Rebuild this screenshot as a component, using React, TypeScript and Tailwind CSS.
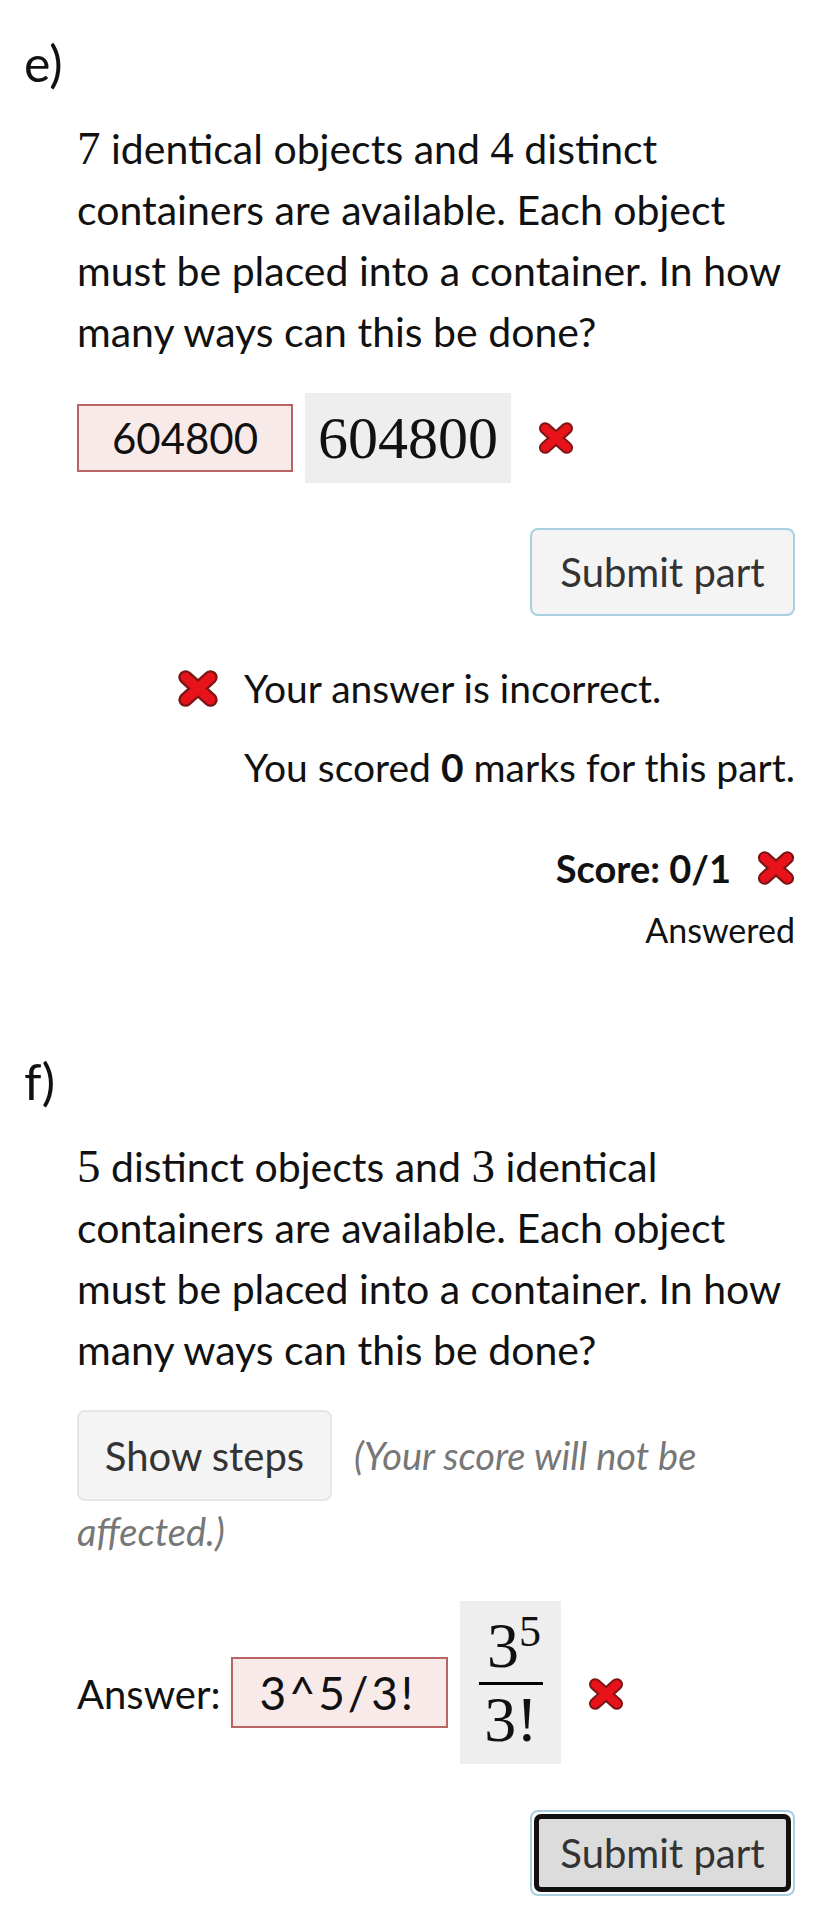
import React from "react";

function Cross({ w, h }: { w: number; h: number }) {
  return (
    <svg width={w} height={h} viewBox="0 0 24 22" className="shrink-0">
      <g strokeLinecap="round">
        <path d="M4.6 4.4 L19.4 17.6 M19.4 4.4 L4.6 17.6" stroke="#7d1515" strokeWidth="8.6" fill="none" />
        <path d="M4.6 4.4 L19.4 17.6 M19.4 4.4 L4.6 17.6" stroke="#e8121b" strokeWidth="5.8" fill="none" />
      </g>
    </svg>
  );
}

const M = ({ children }: { children: React.ReactNode }) => (
  <span className="font-['Liberation_Serif'] text-[47px]">{children}</span>
);

export default function App() {
  return (
    <div className="w-[828px] min-h-[1920px] bg-white pl-[24px] pr-[33px] font-['Lato'] text-[#111]">
      {/* Part e */}
      <div className="pt-[33px] text-[50px] leading-[60px]">e)</div>
      <div className="pl-[53px]">
        <p className="mt-[25px] text-[41px] leading-[61px]">
          <M>7</M> identical objects and <M>4</M> distinct
          <br />
          containers are available. Each object
          <br />
          must be placed into a container. In how
          <br />
          many ways can this be done?
        </p>

        <div className="mt-[31px] flex items-center">
          <div className="flex h-[68px] w-[216px] items-center justify-center border-2 border-[#b86464] bg-[#f9eaea] text-[42px] text-[#111]">
            604800
          </div>
          <div className="ml-[12px] flex h-[90px] w-[206px] items-center justify-center bg-[#eeeeee] font-['Liberation_Serif'] text-[60px] leading-[90px]">
            604800
          </div>
          <div className="ml-[27px]">
            <Cross w={36} h={32} />
          </div>
        </div>

        <div className="mt-[45px] flex justify-end">
          <button className="h-[88px] w-[265px] rounded-[8px] border-2 border-[#a9cfe0] bg-[#f4f4f4] text-[40px] text-[#333]">
            Submit part
          </button>
        </div>

        <div className="mt-[42px] flex justify-end">
          <div className="grid grid-cols-[40px_auto] items-center gap-x-[27px] gap-y-[19px] text-[39px] leading-[60px]">
            <Cross w={42} h={37} />
            <div>Your answer is incorrect.</div>
            <div />
            <div>
              You scored <b>0</b> marks for this part.
            </div>
          </div>
        </div>

        <div className="mt-[41px] flex items-center justify-end">
          <span className="text-[38px] font-bold leading-[60px]">Score: 0/1</span>
          <div className="ml-[26px]">
            <Cross w={38} h={34} />
          </div>
        </div>
        <div className="mt-[2px] text-right text-[34px] leading-[60px]">Answered</div>
      </div>

      {/* Part f */}
      <div className="mt-[91px] text-[50px] leading-[60px]">f)</div>
      <div className="pl-[53px]">
        <p className="mt-[25px] text-[41px] leading-[61px]">
          <M>5</M> distinct objects and <M>3</M> identical
          <br />
          containers are available. Each object
          <br />
          must be placed into a container. In how
          <br />
          many ways can this be done?
        </p>

        <div className="mt-[30px] flex items-center">
          <button className="h-[91px] w-[255px] rounded-[8px] border-2 border-[#e6e6e6] bg-[#f4f4f4] text-[40px] text-[#333]">
            Show steps
          </button>
          <span className="ml-[22px] text-[38px] italic text-[#777]">(Your score will not be</span>
        </div>
        <div className="text-[38px] italic leading-[60px] text-[#777]">affected.)</div>

        <div className="mt-[40px] flex items-center">
          <span className="mt-[22px] text-[40px] leading-[60px]">Answer:</span>
          <div className="ml-[11px] mt-[20px] flex h-[71px] w-[217px] items-center border-2 border-[#b86464] bg-[#f9eaea] pl-[26px] text-[46px] tracking-[0.06em] text-[#111]">
            3^5/3!
          </div>
          <div className="ml-[12px] flex h-[163px] w-[101px] flex-col items-center justify-center bg-[#eeeeee] font-['Liberation_Serif']">
            <div className="flex items-start pl-[6px]">
              <span className="text-[64px] leading-[60px]">3</span>
              <span className="-mt-[6px] text-[44px] leading-[44px]">5</span>
            </div>
            <div className="my-[6px] h-[3px] w-[64px] bg-black" />
            <div className="text-[64px] leading-[58px]">3!</div>
          </div>
          <div className="ml-[27px] mt-[22px]">
            <Cross w={36} h={32} />
          </div>
        </div>

        <div className="mt-[46px] flex justify-end">
          <button className="h-[86px] w-[265px] rounded-[8px] border-2 border-[#a9cfe0] bg-white p-[2px]">
            <span className="flex h-full w-full items-center justify-center rounded-[7px] border-[5px] border-[#111] bg-[#dcdcdc] text-[40px] text-[#333]">
              Submit part
            </span>
          </button>
        </div>
      </div>
    </div>
  );
}
